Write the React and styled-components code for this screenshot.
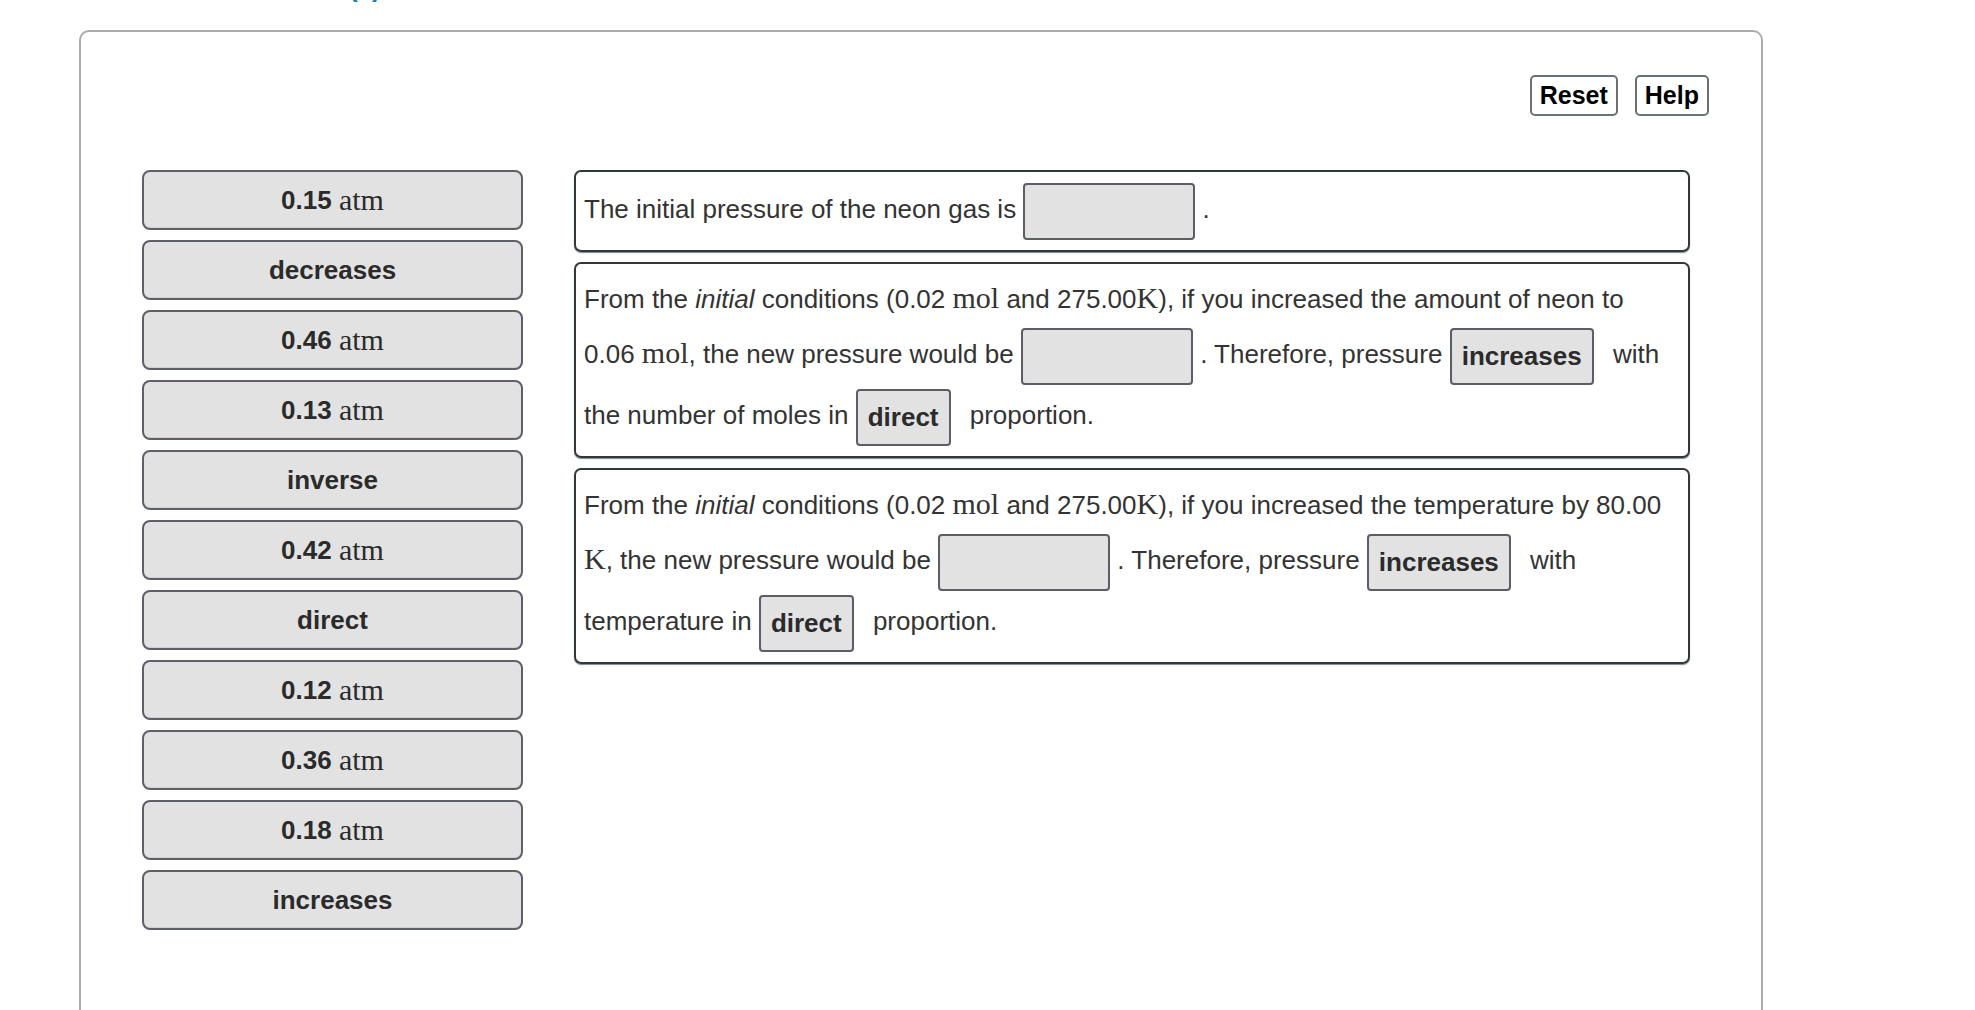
import styled, { createGlobalStyle } from "styled-components";

const GlobalStyle = createGlobalStyle`
  html, body {
    margin: 0;
    padding: 0;
    background: #fff;
    overflow: hidden;
  }
  body {
    font-family: "Liberation Sans", Arial, sans-serif;
    color: #333;
  }
`;

const Page = styled.div`
  width: 1975px;
  height: 1010px;
  overflow: hidden;
`;

/* the part label is scrolled off, only its bottom shows */
const PartLabel = styled.div`
  height: 30px;
  overflow: hidden;
  padding-left: 349px;
  & > span {
    display: block;
    margin-top: -27px;
    font-size: 26px;
    line-height: 30px;
    font-weight: 700;
    color: #1b7cb8;
  }
`;

const Card = styled.section`
  box-sizing: border-box;
  margin-left: 79px;
  width: 1684px;
  height: 1100px;
  border: 2px solid #ababab;
  border-radius: 10px;
`;

const Toolbar = styled.div`
  display: flex;
  justify-content: flex-end;
  gap: 17px;
  padding: 43px 52px 0 0;
`;

const ToolButton = styled.button`
  box-sizing: border-box;
  height: 41px;
  padding: 0 8px;
  border: 2px solid #6c7176;
  border-radius: 5px;
  background: #fff;
  color: #000;
  font-family: "Liberation Sans", Arial, sans-serif;
  font-size: 25px;
  font-weight: 700;
  cursor: pointer;
`;

const Body = styled.div`
  display: flex;
  align-items: flex-start;
  gap: 51px;
  margin-top: 54px;
  padding-left: 61px;
`;

const Bank = styled.div`
  display: flex;
  flex-direction: column;
  gap: 10px;
  width: 381px;
`;

const Tile = styled.div`
  box-sizing: border-box;
  display: flex;
  align-items: center;
  justify-content: center;
  height: 60px;
  border: 2.5px solid #5e6069;
  border-radius: 8px;
  background: #e2e2e2;
  font-size: 26px;
  font-weight: 700;
  color: #2b2b2b;
  box-shadow: inset 0 -1px 0 #d2d2d2;
`;

const Math = styled.span`
  font-family: "Liberation Serif", "Times New Roman", serif;
  font-weight: 400;
  font-size: 30px;
`;

const Statements = styled.div`
  display: flex;
  flex-direction: column;
  gap: 10px;
  width: 1116px;
`;

const Statement = styled.div`
  box-sizing: border-box;
  padding: ${(p) => (p.$single ? "9px 8px 8px" : "7px 8px 8px")};
  border: 2px solid #32373b;
  border-radius: 7px;
  box-shadow: 0 1px 1px #7d858b;
  font-size: 26px;
  color: #333;
`;

const Line = styled.div`
  line-height: 54px;
  white-space: nowrap;
`;

const Slot = styled.span`
  box-sizing: border-box;
  display: inline-block;
  vertical-align: middle;
  height: 57px;
  margin: 2px ${(p) => (p.$filled ? "12px" : "0")} 2px 0;
  padding: 0 10px;
  min-width: ${(p) => (p.$filled ? "0" : "172px")};
  border: 2px solid #5b5e67;
  border-radius: 4px;
  background: #e2e2e2;
  line-height: 53px;
  font-weight: 700;
  color: #2b2b2b;
`;

const tiles = [
  ["0.15", true],
  ["decreases"],
  ["0.46", true],
  ["0.13", true],
  ["inverse"],
  ["0.42", true],
  ["direct"],
  ["0.12", true],
  ["0.36", true],
  ["0.18", true],
  ["increases"],
];

const Conditions = () => (
  <>
    From the <i>initial</i> conditions (0.02 <Math>mol</Math> and 275.00
    <Math>K</Math>), if you increased the
  </>
);

const App = () => (
  <Page>
    <GlobalStyle />
    <PartLabel>
      <span>(c)</span>
    </PartLabel>
    <Card>
      <Toolbar>
        <ToolButton>Reset</ToolButton>
        <ToolButton>Help</ToolButton>
      </Toolbar>
      <Body>
        <Bank>
          {tiles.map(([label, atm]) => (
            <Tile key={label}>
              {label}
              {atm && (
                <>
                  &nbsp;<Math>atm</Math>
                </>
              )}
            </Tile>
          ))}
        </Bank>
        <Statements>
          <Statement $single>
            <Line>
              The initial pressure of the neon gas is <Slot /> .
            </Line>
          </Statement>
          <Statement>
            <Line>
              <Conditions /> amount of neon to
            </Line>
            <Line>
              0.06 <Math>mol</Math>, the new pressure would be <Slot /> .
              Therefore, pressure <Slot $filled>increases</Slot> with
            </Line>
            <Line>
              the number of moles in <Slot $filled>direct</Slot> proportion.
            </Line>
          </Statement>
          <Statement>
            <Line>
              <Conditions /> temperature by 80.00
            </Line>
            <Line>
              <Math>K</Math>, the new pressure would be <Slot /> . Therefore,
              pressure <Slot $filled>increases</Slot> with
            </Line>
            <Line>
              temperature in <Slot $filled>direct</Slot> proportion.
            </Line>
          </Statement>
        </Statements>
      </Body>
    </Card>
  </Page>
);

export default App;
